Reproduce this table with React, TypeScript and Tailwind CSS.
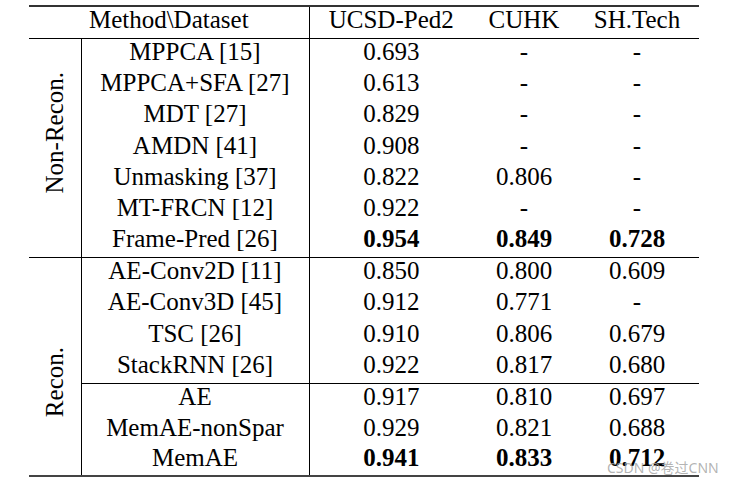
type Row = { method: string; ucsd: string; cuhk: string; sh: string; bold?: boolean };

const nonRecon: Row[] = [
  { method: 'MPPCA [15]', ucsd: '0.693', cuhk: '-', sh: '-' },
  { method: 'MPPCA+SFA [27]', ucsd: '0.613', cuhk: '-', sh: '-' },
  { method: 'MDT [27]', ucsd: '0.829', cuhk: '-', sh: '-' },
  { method: 'AMDN [41]', ucsd: '0.908', cuhk: '-', sh: '-' },
  { method: 'Unmasking [37]', ucsd: '0.822', cuhk: '0.806', sh: '-' },
  { method: 'MT-FRCN [12]', ucsd: '0.922', cuhk: '-', sh: '-' },
  { method: 'Frame-Pred [26]', ucsd: '0.954', cuhk: '0.849', sh: '0.728', bold: true },
];

const recon: Row[] = [
  { method: 'AE-Conv2D [11]', ucsd: '0.850', cuhk: '0.800', sh: '0.609' },
  { method: 'AE-Conv3D [45]', ucsd: '0.912', cuhk: '0.771', sh: '-' },
  { method: 'TSC [26]', ucsd: '0.910', cuhk: '0.806', sh: '0.679' },
  { method: 'StackRNN [26]', ucsd: '0.922', cuhk: '0.817', sh: '0.680' },
];

const ours: Row[] = [
  { method: 'AE', ucsd: '0.917', cuhk: '0.810', sh: '0.697' },
  { method: 'MemAE-nonSpar', ucsd: '0.929', cuhk: '0.821', sh: '0.688' },
  { method: 'MemAE', ucsd: '0.941', cuhk: '0.833', sh: '0.712', bold: true },
];

const Cells = ({ r }: { r: Row }) => (
  <>
    <td className="border-r border-black p-0 pb-[5px] text-center">{r.method}</td>
    <td className={`p-0 pb-[5px] text-center ${r.bold ? 'font-bold' : ''}`}>{r.ucsd}</td>
    <td className={`p-0 pb-[5px] text-center ${r.bold ? 'font-bold' : ''}`}>{r.cuhk}</td>
    <td className={`p-0 pb-[5px] text-center ${r.bold ? 'font-bold' : ''}`}>{r.sh}</td>
  </>
);

export default function App() {
  return (
    <div className="relative w-[734px] h-[484px] overflow-hidden bg-white text-black">
      <div className="pt-[5px] pl-[29px]">
        <table
          className="table-fixed border-collapse w-[670px] text-[25px] leading-none"
          style={{ fontFamily: '"Liberation Serif", "Times New Roman", serif' }}
        >
          <colgroup>
            <col className="w-[52px]" />
            <col className="w-[228px]" />
            <col className="w-[164px]" />
            <col className="w-[102px]" />
            <col className="w-[124px]" />
          </colgroup>
          <thead>
            <tr className="h-[32px] border-t-2 border-[#333]">
              <th colSpan={2} className="border-r border-black p-0 pb-[5px] font-normal text-center">
                Method\Dataset
              </th>
              <th className="p-0 pb-[5px] font-normal text-center">UCSD-Ped2</th>
              <th className="p-0 pb-[5px] font-normal text-center">CUHK</th>
              <th className="p-0 pb-[5px] font-normal text-center">SH.Tech</th>
            </tr>
          </thead>
          <tbody>
            {nonRecon.map((r, i) => (
              <tr key={r.method} className={`h-[31.3px] ${i === 0 ? 'border-t border-black' : ''}`}>
                {i === 0 && (
                  <td rowSpan={7} className="border-r border-black p-0 pb-[30px] align-middle">
                    <div className="flex justify-center">
                      <span className="[writing-mode:vertical-rl] rotate-180">Non-Recon.</span>
                    </div>
                  </td>
                )}
                <Cells r={r} />
              </tr>
            ))}
            {recon.map((r, i) => (
              <tr key={r.method} className={`h-[31.5px] ${i === 0 ? 'border-t border-black' : ''}`}>
                {i === 0 && (
                  <td rowSpan={7} className="border-r border-black p-0 pt-[32px] align-middle">
                    <div className="flex justify-center">
                      <span className="[writing-mode:vertical-rl] rotate-180">Recon.</span>
                    </div>
                  </td>
                )}
                <Cells r={r} />
              </tr>
            ))}
            {ours.map((r, i) => (
              <tr key={r.method} className={`h-[31px] ${i === 0 ? 'border-t border-black' : ''}`}>
                <Cells r={r} />
              </tr>
            ))}
            <tr className="border-t-2 border-[#444]">
              <td colSpan={5} className="p-0 h-0" />
            </tr>
          </tbody>
        </table>
      </div>
      <div
        className="absolute left-[607px] top-[461px] text-[14px] leading-none text-[#a0a0a0]/80"
        style={{ fontFamily: '"Noto Sans", "Noto Sans CJK SC", sans-serif' }}
      >
        CSDN @卷过CNN
      </div>
    </div>
  );
}
